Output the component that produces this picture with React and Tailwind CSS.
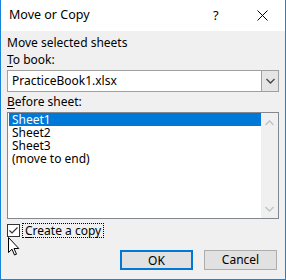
import { useState } from 'react'

const font = { fontFamily: '"Noto Sans", "Liberation Sans", sans-serif' }

function Chevron({ up, color }) {
  return (
    <svg width="9" height="6" viewBox="0 0 9 6">
      <path
        d={up ? 'M0.5 5 L4.5 1 L8.5 5' : 'M0.5 1 L4.5 5 L8.5 1'}
        fill="none"
        stroke={color}
        strokeWidth="1.3"
      />
    </svg>
  )
}

export default function App() {
  const [selected, setSelected] = useState(0)
  const [copy, setCopy] = useState(true)
  const sheets = ['Sheet1', 'Sheet2', 'Sheet3', '(move to end)']

  return (
    <div
      className="relative w-[286px] h-[280px] flex flex-col bg-[#f0f0f0] border-l border-r border-b border-[#1883d7] text-[12px] text-black"
      style={font}
    >
      {/* Title bar */}
      <div className="h-[31px] shrink-0 bg-white flex items-center pl-[8px]">
        <span className="text-[12.5px] flex-1">Move or Copy</span>
        <span className="w-[8px] text-[13px] mr-[36px]">?</span>
        <svg width="11" height="11" viewBox="0 0 11 11" className="mr-[17px]">
          <path d="M0.5 0.5 L10.5 10.5 M10.5 0.5 L0.5 10.5" stroke="#000" strokeWidth="1" />
        </svg>
      </div>

      {/* Body */}
      <div className="flex flex-col px-[6px] pt-[4px]">
        <div className="h-[16px] leading-[16px]">Move selected sheets</div>
        <div className="h-[16px] leading-[16px] mt-[1px]">
          <span className="underline underline-offset-2">T</span>o book:
        </div>

        <div className="mt-[2px] h-[22px] flex border border-[#a0a0a0] bg-white">
          <div className="flex-1 flex items-center pl-[4px]">PracticeBook1.xlsx</div>
          <div className="w-[17px] flex items-center justify-center bg-[#e5e5e5] border-l border-[#a0a0a0]">
            <Chevron color="#444" />
          </div>
        </div>

        <div className="h-[16px] leading-[16px] mt-[2px]">
          <span className="underline underline-offset-2">B</span>efore sheet:
        </div>

        <div className="mt-[2px] h-[107px] flex border border-[#828790] bg-white">
          <div className="flex-1 pl-[1px] pt-0">
            {sheets.map((s, i) => (
              <div
                key={s}
                onClick={() => setSelected(i)}
                className={`h-[13px] leading-[13px] pl-[3px] ${
                  selected === i ? 'bg-[#0078d7] text-white' : ''
                }`}
              >
                {s}
              </div>
            ))}
          </div>
          <div className="w-[17px] bg-[#f0f0f0] flex flex-col items-center justify-between pt-[7px] pb-[6px]">
            <Chevron up color="#c2c2c2" />
            <Chevron color="#c2c2c2" />
          </div>
        </div>

        <div className="mt-[4px] h-[15px] flex items-center">
          <button
            onClick={() => setCopy(!copy)}
            className="w-[13px] h-[13px] border border-[#333] bg-white flex items-center justify-center"
          >
            {copy && (
              <svg width="11" height="11" viewBox="0 0 11 11">
                <path d="M1.5 5.5 L4 8 L9.5 2.5" fill="none" stroke="#333" strokeWidth="1.2" />
              </svg>
            )}
          </button>
          <div className="ml-[2px] h-[15px] leading-[14px] px-[2px] border border-dotted border-black">
            <span className="underline underline-offset-2">C</span>reate a copy
          </div>
        </div>

        <div className="mt-[12px] h-[20px] flex justify-end gap-[11px] pr-[2px]">
          <button className="w-[73px] h-[20px] bg-[#e1e1e1] border-2 border-[#0078d7] text-[12px]">
            OK
          </button>
          <button className="w-[73px] h-[20px] bg-[#e1e1e1] border border-[#adadad] text-[12px]">
            Cancel
          </button>
        </div>
      </div>

      {/* Mouse pointer */}
      <svg
        width="12"
        height="19"
        viewBox="0 0 12 19"
        className="absolute left-[7px] top-[237px]"
      >
        <path
          d="M0.5 0.5 L0.5 15.5 L4 12.2 L6.5 18 L8.5 17.2 L6 11.5 L10.8 11.5 Z"
          fill="#fff"
          stroke="#000"
          strokeWidth="1"
          strokeLinejoin="miter"
        />
      </svg>
    </div>
  )
}
